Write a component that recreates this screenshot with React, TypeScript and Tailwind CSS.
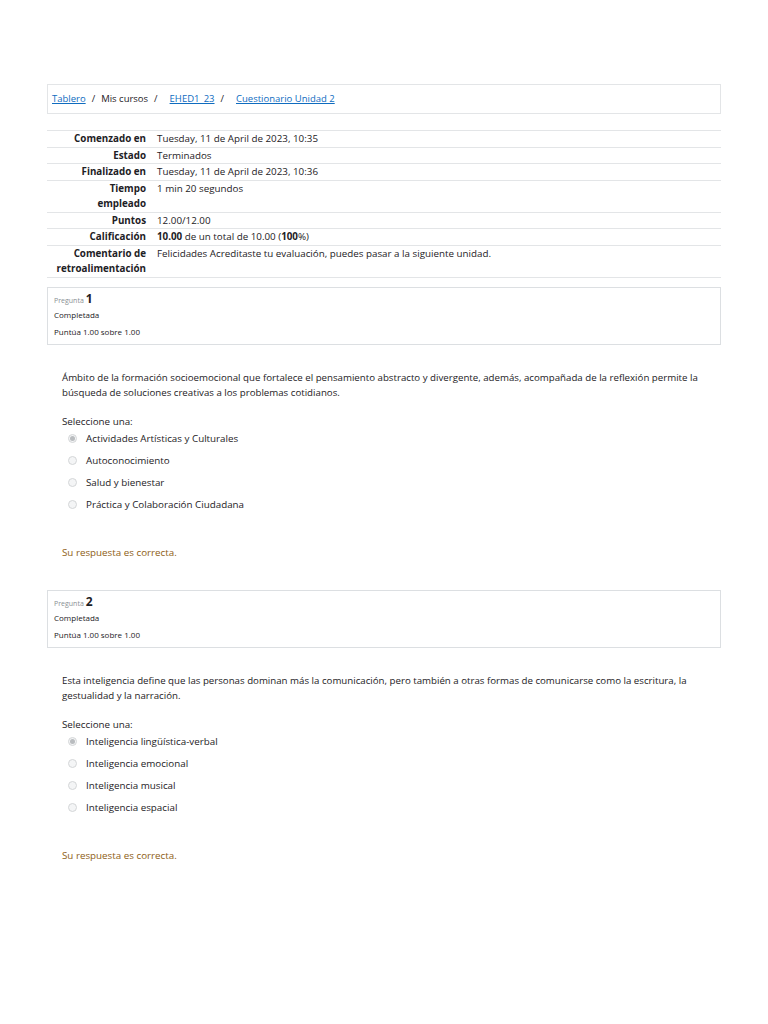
import React from 'react'

const rows: { label: React.ReactNode; value: React.ReactNode }[] = [
  { label: 'Comenzado en', value: 'Tuesday, 11 de April de 2023, 10:35' },
  { label: 'Estado', value: 'Terminados' },
  { label: 'Finalizado en', value: 'Tuesday, 11 de April de 2023, 10:36' },
  { label: <>Tiempo<br />empleado</>, value: '1 min 20 segundos' },
  { label: 'Puntos', value: '12.00/12.00' },
  { label: 'Calificación', value: <><b>10.00</b> de un total de 10.00 (<b>100</b>%)</> },
  { label: <>Comentario de<br />retroalimentación</>, value: 'Felicidades Acreditaste tu evaluación, puedes pasar a la siguiente unidad.' },
]

const preguntas = [
  {
    n: 1,
    texto: 'Ámbito de la formación socioemocional que fortalece el pensamiento abstracto y divergente, además, acompañada de la reflexión permite la búsqueda de soluciones creativas a los problemas cotidianos.',
    opciones: ['Actividades Artísticas y Culturales', 'Autoconocimiento', 'Salud y bienestar', 'Práctica y Colaboración Ciudadana'],
  },
  {
    n: 2,
    texto: 'Esta inteligencia define que las personas dominan más la comunicación, pero también a otras formas de comunicarse como la escritura, la gestualidad y la narración.',
    opciones: ['Inteligencia lingüística-verbal', 'Inteligencia emocional', 'Inteligencia musical', 'Inteligencia espacial'],
  },
]

function Radio({ checked }: { checked: boolean }) {
  return (
    <span className="w-[9px] h-[9px] rounded-full border border-[#d4d6d8] bg-[#f4f5f6] flex items-center justify-center shrink-0">
      {checked && <span className="w-[5px] h-[5px] rounded-full bg-[#b9bcbf]" />}
    </span>
  )
}

export default function App() {
  return (
    <div className="min-h-[1024px] bg-white text-[#1d2125] text-[9.8px] font-['Open_Sans',sans-serif]">
      <div className="pt-[84px] pl-[47px] pr-[47px]">
        <div className="border border-[#e3e5e7] h-[30px] flex items-center px-[4px] leading-none text-[9.5px]">
          <a className="text-[#0f6cbf] underline">Tablero</a>
          <span className="mx-[6px]">/</span>
          <span>Mis cursos</span>
          <span className="mx-[6px]">/</span>
          <a className="text-[#0f6cbf] underline ml-[6px]">EHED1_23</a>
          <span className="mx-[6px]">/</span>
          <a className="text-[#0f6cbf] underline ml-[6px]">Cuestionario Unidad 2</a>
        </div>

        <table className="mt-[16px] w-full border-t border-[#e3e5e7] leading-[15.5px]">
          <tbody>
            {rows.map((r, i) => (
              <tr key={i} className="border-b border-[#e3e5e7] align-top">
                <th className="w-[100px] text-right font-bold pr-[1px] py-0">{r.label}</th>
                <td className="pl-[10px]">{r.value}</td>
              </tr>
            ))}
          </tbody>
        </table>

        {preguntas.map((p, i) => (
          <div key={p.n} className={i === 0 ? 'mt-[9px]' : 'mt-[30px]'}>
            <div className="border border-[#dcdfe2] h-[58px] px-[6px] pt-[5px] text-[8px] leading-none">
              <div className="flex items-baseline">
                <span className="text-[#8a8f94] text-[7px]">Pregunta</span>
                <span className="font-bold text-[12px] ml-[2px]">{p.n}</span>
              </div>
              <div className="mt-[6px]">Completada</div>
              <div className="mt-[9px]">Puntúa 1.00 sobre 1.00</div>
            </div>
            <div className="px-[15px] pt-[25px]">
              <p className="leading-[15px] text-[9.7px]">{p.texto}</p>
              <p className="mt-[14px] leading-[15px]">Seleccione una:</p>
              <div className="flex flex-col gap-[7px] mt-[2px] leading-[15px]">
                {p.opciones.map((o, j) => (
                  <div key={o} className="flex items-center pl-[6px]">
                    <Radio checked={j === 0} />
                    <span className="ml-[9px]">{o}</span>
                  </div>
                ))}
              </div>
              <p className="mt-[33px] text-[#8e5d14] leading-[15px]">Su respuesta es correcta.</p>
            </div>
          </div>
        ))}
      </div>
    </div>
  )
}
